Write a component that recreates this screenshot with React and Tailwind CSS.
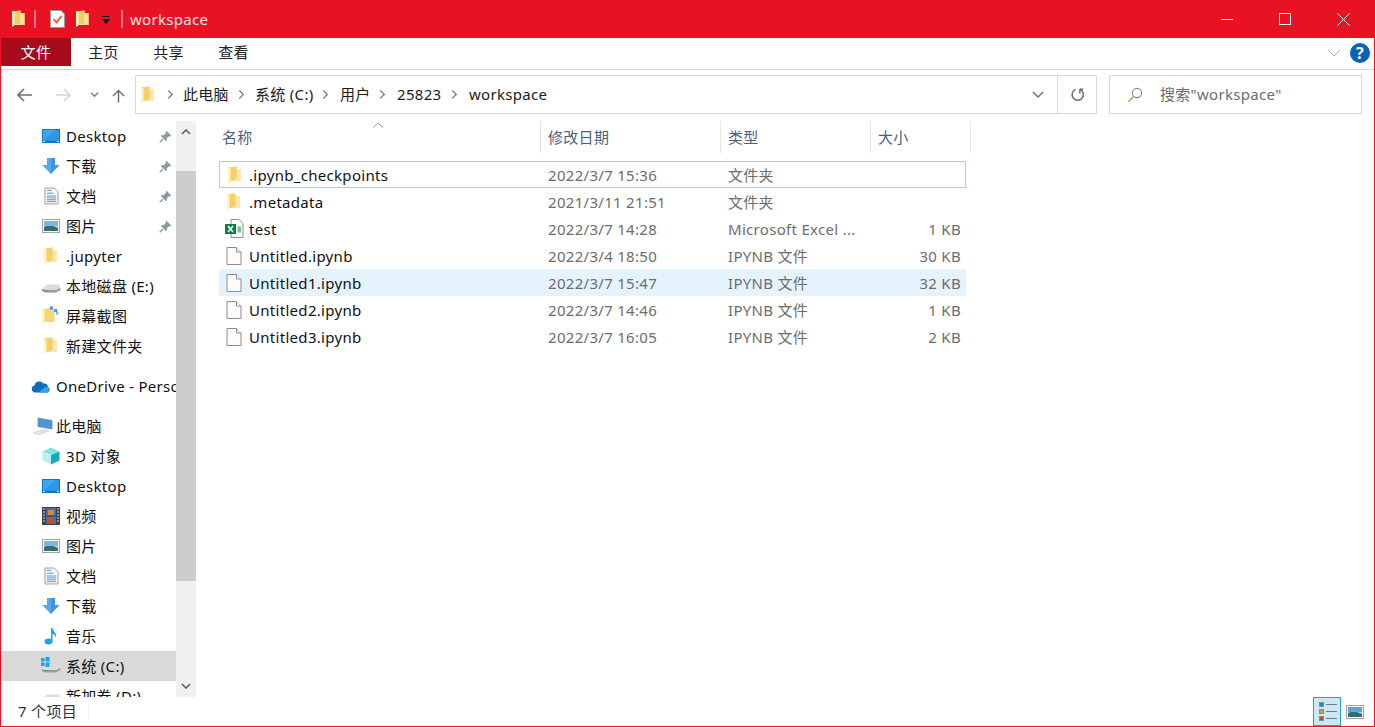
import React from "react";

const Folder = ({ className = "w-[16px] h-[18px] shrink-0" }) => (
  <svg viewBox="0 0 16 18" className={className}>
    <path d="M1 1.5 L9.5 0.5 V3 H13.5 V15 H3.5 L1 17 Z" fill="#fbdc86" />
    <path d="M9.5 3 H13.5 V15 H6 L9.5 13 Z" fill="#f9e6a8" />
    <path d="M1 1.5 L9.5 0.5 V13 L3.5 15 L1 17 Z" fill="#f5cf6c" />
    <path d="M1 1.5 V17 L3.5 15 V2 Z" fill="#fff3c4" />
  </svg>
);

const ScreenshotFolder = () => (
  <svg viewBox="0 0 20 20" className="w-[20px] h-[20px] shrink-0">
    <path d="M1 3 L10 2 V4 H13.5 V16 H3.5 L1 18.5 Z" fill="#f7d57a" />
    <path d="M1 3 V18.5 L3.5 16 V3 Z" fill="#fff3c4" />
    <rect x="9" y="0.5" width="3" height="3" fill="#3b8fd8" />
    <rect x="13" y="3" width="3" height="3" fill="#3b8fd8" />
    <rect x="15" y="6" width="2.5" height="2.5" fill="#7db8e8" />
    <path d="M11 2 L15 5" stroke="#7db8e8" strokeWidth="1" />
  </svg>
);

const Desktop = () => (
  <svg viewBox="0 0 18 14" className="w-[18px] h-[14px] shrink-0">
    <rect width="18" height="14" fill="#0a78c8" />
    <rect x="1" y="1" width="16" height="10.5" fill="#3fa6ee" />
    <path d="M1 11.5 L14 1 H17 V11.5 Z" fill="#2f96e3" />
    <rect x="1" y="12" width="2" height="1" fill="#dff" />
    <rect x="15" y="12" width="2" height="1" fill="#dff" />
  </svg>
);

const Download = () => (
  <svg viewBox="0 0 18 18" className="w-[18px] h-[18px] shrink-0">
    <path d="M5 1 H13 V8 H17.5 L9 17 L0.5 8 H5 Z" fill="#3f92dd" />
    <path d="M5 1 H9 V17 L0.5 8 H5 Z" fill="#59a8ea" />
  </svg>
);

const Doc = () => (
  <svg viewBox="0 0 16 18" className="w-[15px] h-[18px] shrink-0">
    <path d="M1 .5 H11 L15 4.5 V17.5 H1 Z" fill="#f7f7f7" stroke="#9a9a9a" />
    <path d="M3 3 H8 M3 6 H10 M3 9 H13 M3 13 H13" stroke="#3c9be0" strokeWidth="1" />
    <path d="M3 11 H13 M3 15 H13" stroke="#8a8a8a" strokeWidth="1" />
  </svg>
);

const Pic = () => (
  <svg viewBox="0 0 18 14" className="w-[18px] h-[14px] shrink-0">
    <rect x=".5" y=".5" width="17" height="13" fill="#fff" stroke="#a3a3a3" />
    <rect x="2" y="2" width="14" height="5" fill="#7fb4e4" />
    <rect x="2" y="7" width="14" height="5" fill="#2f6f6f" />
    <path d="M2 8 Q8 5 16 9 V7 H2 Z" fill="#bcd7de" />
  </svg>
);

const Drive = ({ win }) => (
  <svg viewBox="0 0 20 18" className="w-[20px] h-[18px] shrink-0">
    <path d="M2 11 L6 7.5 H18 L19.5 11 V13 L15 15.5 H4 L1 14 Z" fill="#dcdcdc" />
    <path d="M1 12 L1 14 L4 15.5 H15 L19.5 13 V11 L15 13 H4 Z" fill="#9c9c9c" />
    <rect x="3" y="13" width="4" height="1" fill="#4fb040" />
    {win && (
      <g fill="#11a9e8">
        <rect x="0" y="1" width="3.5" height="3.5" />
        <rect x="4.5" y="0" width="4" height="4.5" />
        <rect x="0" y="5.5" width="3.5" height="3.5" />
        <rect x="4.5" y="5.5" width="4" height="4.5" />
      </g>
    )}
  </svg>
);

const Cloud = () => (
  <svg viewBox="0 0 20 13" className="w-[20px] h-[13px] shrink-0">
    <path d="M4 12.5 A3.5 3.5 0 0 1 3.5 5.6 A5 5 0 0 1 12.5 3.6 A4 4 0 0 1 17 7 A3 3 0 0 1 16.5 12.5 Z" fill="#0f6cbd" />
    <path d="M8 12.5 L13 7.5 A4 4 0 0 1 17 7 A3 3 0 0 1 16.5 12.5 Z" fill="#2ca5e8" />
  </svg>
);

const PC = () => (
  <svg viewBox="0 0 22 18" className="w-[22px] h-[18px] shrink-0">
    <path d="M6 1 L20 3.5 V12 L6 9.5 Z" fill="#4d95d3" stroke="#6f8ba3" strokeWidth=".8" />
    <path d="M1 16 L12 12.5 L17 14 L7 17.5 Z" fill="#e4e4e4" stroke="#c9c9c9" strokeWidth=".6" />
  </svg>
);

const Cube = () => (
  <svg viewBox="0 0 18 18" className="w-[18px] h-[18px] shrink-0">
    <path d="M9 .5 L17.5 4.5 L9 8 L.5 4.5 Z" fill="#7ee3e8" />
    <path d="M.5 4.5 L9 8 V17.5 L.5 13.5 Z" fill="#bdeef0" />
    <path d="M9 8 L17.5 4.5 V13.5 L9 17.5 Z" fill="#17a9bd" />
  </svg>
);

const Film = () => (
  <svg viewBox="0 0 18 18" className="w-[18px] h-[18px] shrink-0">
    <rect width="18" height="18" fill="#3f3f3f" />
    <rect x="4" y="1" width="10" height="7.5" fill="#3a6fc4" />
    <rect x="4" y="9.5" width="10" height="7.5" fill="#3a6fc4" />
    <rect x="6" y="3" width="6" height="5" fill="#d98a2b" />
    <rect x="6" y="11" width="6" height="5" fill="#c2512a" />
    <path d="M1 2 H3 M1 5 H3 M1 8 H3 M1 11 H3 M1 14 H3 M15 2 H17 M15 5 H17 M15 8 H17 M15 11 H17 M15 14 H17" stroke="#ddd" strokeWidth="1.2" />
  </svg>
);

const Music = () => (
  <svg viewBox="0 0 14 18" className="w-[14px] h-[18px] shrink-0">
    <ellipse cx="4.5" cy="14.5" rx="4" ry="3" fill="#1fa3ee" />
    <path d="M7 1 H8.5 C9 5 13 6 12 10.5 C11 8 9.5 7 8.5 7 V14.5 H7 Z" fill="#1fa3ee" />
  </svg>
);

const Pin = () => (
  <svg viewBox="0 0 14 14" className="w-[13px] h-[13px] shrink-0">
    <path d="M8 .8 L13.2 6 L11.8 7 L10.8 6.6 L8.4 9 L8.6 11 L7.6 12 L2 6.4 L3 5.4 L5 5.6 L7.4 3.2 L7 2.2 Z" fill="#8e9aa3" />
    <path d="M4 9.8 L.8 13.2 L4.2 10" stroke="#8e9aa3" strokeWidth="1.4" />
  </svg>
);

const FileIcon = () => (
  <svg viewBox="0 0 16 18" className="w-[16px] h-[18px] shrink-0">
    <path d="M1 .5 H10.5 L15 5 V17.5 H1 Z" fill="#fbfbfb" stroke="#8c8c8c" />
    <path d="M10.5 .5 V5 H15" fill="#fff" stroke="#8c8c8c" />
  </svg>
);

const ExcelIcon = () => (
  <svg viewBox="0 0 19 19" className="w-[19px] h-[19px] shrink-0">
    <path d="M6 .5 H14 L18 4.5 V18.5 H6 Z" fill="#fff" stroke="#8f8f8f" />
    <rect x="0" y="5" width="11" height="10" fill="#107c41" />
    <path d="M3 7 L8 13 M8 7 L3 13" stroke="#fff" strokeWidth="1.5" />
    <rect x="12.5" y="7.5" width="3.5" height="6" fill="#6cc497" />
  </svg>
);

const Chev = ({ className = "" }) => (
  <svg viewBox="0 0 8 12" className={`w-[7px] h-[11px] shrink-0 ${className}`}>
    <path d="M1.5 1.5 L6 6 L1.5 10.5" fill="none" stroke="#7d7d7d" strokeWidth="1.5" />
  </svg>
);

const Crumb = ({ children, w, ml }) => (
  <div className={`flex items-center ${ml}`}>
    <span className={`text-[#1b1b1b] whitespace-nowrap ${w}`}>{children}</span>
    <Chev />
  </div>
);

const navTop = [
  [<Desktop />, "Desktop", true],
  [<Download />, "下载", true],
  [<Doc />, "文档", true],
  [<Pic />, "图片", true],
  [<Folder />, ".jupyter"],
  [<Drive />, "本地磁盘 (E:)"],
  [<ScreenshotFolder />, "屏幕截图"],
  [<Folder />, "新建文件夹"],
];

const navPc = [
  [<Cube />, "3D 对象"],
  [<Desktop />, "Desktop"],
  [<Film />, "视频"],
  [<Pic />, "图片"],
  [<Doc />, "文档"],
  [<Download />, "下载"],
  [<Music />, "音乐"],
  [<Drive win />, "系统 (C:)", false, true],
  [<Drive />, "新加卷 (D:)"],
];

const NavItem = ({ icon, label, pin, sel }) => (
  <div className={`h-[30px] flex items-center shrink-0 pl-[40px] ${sel ? "bg-[#d9d9d9]" : ""}`}>
    <div className="w-[20px] flex justify-center shrink-0">{icon}</div>
    <span className="ml-[5px] whitespace-nowrap text-[#111]">{label}</span>
    {pin && <div className="ml-auto mr-[4px]"><Pin /></div>}
  </div>
);

const rows = [
  [<Folder />, ".ipynb_checkpoints", "2022/3/7 15:36", "文件夹", "", "focus"],
  [<Folder />, ".metadata", "2021/3/11 21:51", "文件夹", ""],
  [<ExcelIcon />, "test", "2022/3/7 14:28", "Microsoft Excel ...", "1 KB"],
  [<FileIcon />, "Untitled.ipynb", "2022/3/4 18:50", "IPYNB 文件", "30 KB"],
  [<FileIcon />, "Untitled1.ipynb", "2022/3/7 15:47", "IPYNB 文件", "32 KB", "hover"],
  [<FileIcon />, "Untitled2.ipynb", "2022/3/7 14:46", "IPYNB 文件", "1 KB"],
  [<FileIcon />, "Untitled3.ipynb", "2022/3/7 16:05", "IPYNB 文件", "2 KB"],
];

export default function App() {
  return (
    <div className="w-[1375px] h-[727px] overflow-hidden flex flex-col border-x border-b border-[#e81224] bg-white text-[15px] tracking-[0.3px] font-['Noto_Sans','Noto_Sans_CJK_SC',sans-serif]">
      {/* Title bar */}
      <div className="h-[38px] shrink-0 bg-[#e81224] flex items-center text-white pl-[10px]">
        <div className="flex items-center">
          <Folder />
          <div className="ml-[7px] w-[2px] h-[18px] bg-[#f07a85]" />
          <div className="ml-[14px] w-[15px] h-[18px]">
            <svg viewBox="0 0 15 18" className="w-[15px] h-[18px]">
              <path d="M.5 .5 H11 L14.5 4 V17.5 H.5 Z" fill="#fafafa" stroke="#9b9b9b" />
              <path d="M3.5 9 L6.5 12.5 L11.5 6" fill="none" stroke="#e8622c" strokeWidth="1.8" />
            </svg>
          </div>
          <div className="ml-[10px]"><Folder /></div>
          <div className="ml-[10px] w-[9px] flex flex-col items-center gap-[2px] mt-[2px]">
            <div className="w-[7px] h-px bg-black" />
            <svg viewBox="0 0 8 5" className="w-[8px] h-[5px]"><path d="M0 0 H8 L4 5 Z" fill="#000" /></svg>
          </div>
          <div className="ml-[11px] w-[2px] h-[18px] bg-[#f07a85]" />
          <span className="ml-[7px] pt-[1px] text-[#fde8ea]">workspace</span>
        </div>
        <div className="ml-auto flex items-center h-full">
          <div className="w-[58px] flex justify-center">
            <div className="w-[12px] h-px bg-white" />
          </div>
          <div className="w-[58px] flex justify-center">
            <div className="w-[12px] h-[12px] border border-white" />
          </div>
          <div className="w-[59px] mr-[1px] flex justify-center">
            <svg viewBox="0 0 13 13" className="w-[13px] h-[13px]"><path d="M.5 .5 L12.5 12.5 M12.5 .5 L.5 12.5" stroke="#fff" strokeWidth="1" /></svg>
          </div>
        </div>
      </div>

      {/* Ribbon tabs */}
      <div className="h-[32px] shrink-0 flex border-b border-[#d9d9d9] text-[#222]">
        <div className="w-[70px] h-[28px] pt-[1px] bg-[#a80b1b] text-white flex items-center justify-center">文件</div>
        <div className="w-[65px] h-[28px] pt-[1px] flex items-center justify-center">主页</div>
        <div className="w-[65px] h-[28px] pt-[1px] flex items-center justify-center">共享</div>
        <div className="w-[65px] h-[28px] pt-[1px] flex items-center justify-center">查看</div>
        <div className="ml-auto flex items-center h-[30px] pr-[4px]">
          <svg viewBox="0 0 14 8" className="w-[14px] h-[8px] mr-[9px]"><path d="M1 1 L7 7 L13 1" fill="none" stroke="#b0b0b0" strokeWidth="1" /></svg>
          <div className="w-[20px] h-[20px] rounded-full bg-[#0a62b8] flex items-center justify-center text-white text-[16px] font-bold leading-none">?</div>
        </div>
      </div>

      {/* Address row */}
      <div className="h-[51px] shrink-0 flex items-start pt-[5px]">
        <div className="w-[134px] h-[39px] flex items-center">
          <svg viewBox="0 0 16 14" className="ml-[16px] w-[16px] h-[14px]"><path d="M1 7 H15 M7 1 L1 7 L7 13" fill="none" stroke="#6e6e6e" strokeWidth="1.6" /></svg>
          <svg viewBox="0 0 16 14" className="ml-[22px] w-[16px] h-[14px]"><path d="M1 7 H15 M9 1 L15 7 L9 13" fill="none" stroke="#d6d6d6" strokeWidth="1.6" /></svg>
          <svg viewBox="0 0 10 7" className="ml-[19px] w-[9px] h-[6px]"><path d="M1 1 L5 5 L9 1" fill="none" stroke="#7d7d7d" strokeWidth="1.6" /></svg>
          <svg viewBox="0 0 14 16" className="ml-[13px] w-[13px] h-[16px] mt-[2px]"><path d="M7 15 V2 M1 8 L7 2 L13 8" fill="none" stroke="#6e6e6e" strokeWidth="1.6" /></svg>
        </div>
        <div className="w-[962px] h-[39px] border border-[#d9d9d9] flex items-center pl-[4px]">
          <Folder />
          <Chev className="ml-[11px]" />
          <Crumb w="w-[55px]" ml="ml-[9px]">此电脑</Crumb>
          <Crumb w="w-[67px]" ml="ml-[10px]">系统 (C:)</Crumb>
          <Crumb w="w-[39px]" ml="ml-[11px]">用户</Crumb>
          <Crumb w="w-[54px]" ml="ml-[11px]">25823</Crumb>
          <span className="ml-[11px] text-[#1b1b1b]">workspace</span>
          <div className="ml-auto flex items-center h-full">
            <svg viewBox="0 0 12 7" className="w-[12px] h-[7px] mr-[13px]"><path d="M1 1 L6 6 L11 1" fill="none" stroke="#6e6e6e" strokeWidth="1.4" /></svg>
            <div className="w-px h-full bg-[#d9d9d9]" />
            <div className="w-[38px] flex justify-center">
              <svg viewBox="0 0 16 16" className="w-[15px] h-[15px]"><path d="M6 2.5 A6 6 0 1 0 10.5 2.5 M10.5 2.5 V7 M10.5 2.5 L14 2.5" fill="none" stroke="#6e6e6e" strokeWidth="1.6" /></svg>
            </div>
          </div>
        </div>
        <div className="ml-[12px] w-[253px] h-[39px] border border-[#d9d9d9] flex items-center pl-[17px] text-[#6d6d6d]">
          <svg viewBox="0 0 16 16" className="w-[16px] h-[16px]"><circle cx="10" cy="6" r="4.6" fill="none" stroke="#8a8a8a" strokeWidth="1.1" /><path d="M6.5 9.5 L1.5 14.5" stroke="#b38a5a" strokeWidth="1.3" /></svg>
          <span className="ml-[17px]">搜索"workspace"</span>
        </div>
      </div>

      {/* Body */}
      <div className="flex-1 flex min-h-0">
        <div className="w-[175px] shrink-0 overflow-hidden flex flex-col">
          {navTop.map(([i, l, p], k) => <NavItem key={k} icon={i} label={l} pin={p} />)}
          <div className="h-[10px] shrink-0" />
          <div className="h-[30px] flex items-center shrink-0 pl-[30px] overflow-hidden">
            <Cloud />
            <span className="ml-[5px] whitespace-nowrap text-[#111]">OneDrive - Personal</span>
          </div>
          <div className="h-[10px] shrink-0" />
          <div className="h-[30px] flex items-center shrink-0 pl-[31px]">
            <PC />
            <span className="ml-[2px] text-[#111]">此电脑</span>
          </div>
          {navPc.map(([i, l, p, s], k) => <NavItem key={k} icon={i} label={l} pin={p} sel={s} />)}
        </div>
        <div className="w-[20px] shrink-0 bg-[#f0f0f0] flex flex-col">
          <div className="h-[50px] flex justify-center pt-[8px]">
            <svg viewBox="0 0 10 6" className="w-[10px] h-[6px]"><path d="M1 5 L5 1 L9 5" fill="none" stroke="#5f5f5f" strokeWidth="1.6" /></svg>
          </div>
          <div className="h-[410px] bg-[#cdcdcd]" />
          <div className="flex-1 flex justify-center items-end pb-[8px]">
            <svg viewBox="0 0 10 6" className="w-[10px] h-[6px]"><path d="M1 1 L5 5 L9 1" fill="none" stroke="#5f5f5f" strokeWidth="1.6" /></svg>
          </div>
        </div>

        <div className="flex-1 min-w-0 relative">
          <svg viewBox="0 0 12 6" className="absolute left-[176px] top-[1px] w-[12px] h-[6px]"><path d="M1 5.5 L6 1 L11 5.5" fill="none" stroke="#9a9a9a" strokeWidth="1" /></svg>
          <div className="h-[32px] flex text-[#4c607a]">
            <div className="w-[345px] pl-[26px] flex items-center border-r-[1.5px] border-[#e5e5e5]">名称</div>
            <div className="w-[180px] pl-[7px] flex items-center border-r-[1.5px] border-[#e5e5e5]">修改日期</div>
            <div className="w-[150px] pl-[7px] flex items-center border-r-[1.5px] border-[#e5e5e5]">类型</div>
            <div className="w-[100px] pl-[7px] flex items-center border-r-[1.5px] border-[#e5e5e5]">大小</div>
          </div>
          <div className="mt-[8px] ml-[23px] w-[747px] flex flex-col">
            {rows.map(([icon, name, date, type, size, st], k) => (
              <div
                key={k}
                className={`h-[27px] pt-[2px] grid items-center ${st === "focus" ? "border border-[#99d1ff] grid-cols-[29px_299px_180px_133px_1fr]" : st === "hover" ? "bg-[#e5f3ff] grid-cols-[30px_299px_180px_133px_1fr]" : "grid-cols-[30px_299px_180px_133px_1fr]"}`}
              >
                <div className="flex justify-center -mt-[2px]">{icon}</div>
                <span className="text-[#111] whitespace-nowrap">{name}</span>
                <span className="text-[#6d6d6d] whitespace-nowrap">{date}</span>
                <span className="text-[#6d6d6d] whitespace-nowrap">{type}</span>
                <span className="text-[#6d6d6d] text-right pr-[5px] whitespace-nowrap">{size}</span>
              </div>
            ))}
          </div>
        </div>
      </div>

      {/* Status */}
      <div className="h-[29px] shrink-0 flex items-center text-[#333]">
        <span className="ml-[17px] w-[70px]">7 个项目</span>
        <div className="w-px h-[14px] bg-[#efefef]" />
        <div className="ml-auto flex items-center h-full">
          <div className="w-[28px] h-full bg-[#cbe8f6] border border-[#26a0da] flex flex-col justify-center gap-[2px] pl-[5px]">
            {["#3a7cc0", "#c8a030", "#c84a30"].map((c, i) => (
              <div key={i} className="flex items-center gap-[2px]">
                <div className="w-[5px] h-[5px] border border-[#8a8a8a]" style={{ backgroundColor: c }} />
                <div className="w-[11px] h-px bg-[#777]" />
              </div>
            ))}
          </div>
          <div className="ml-[5px] mr-[10px]">
            <svg viewBox="0 0 18 14" className="w-[18px] h-[14px]">
              <rect x=".5" y=".5" width="17" height="13" fill="#fff" stroke="#a3a3a3" />
              <rect x="2" y="2" width="14" height="5" fill="#5aa3e0" />
              <rect x="2" y="7" width="14" height="5" fill="#2f6f6f" />
              <path d="M2 8 Q8 5 16 9 V7 H2 Z" fill="#bcd7de" />
            </svg>
          </div>
        </div>
      </div>
    </div>
  );
}
